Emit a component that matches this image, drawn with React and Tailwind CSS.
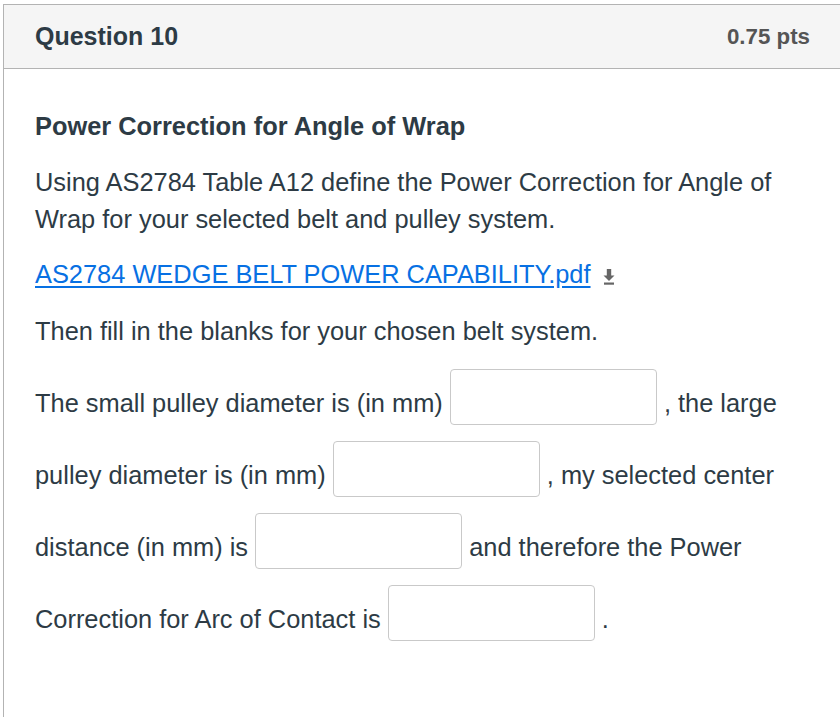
import React from "react";

const FONT = { fontFamily: '"Liberation Sans", Arial, sans-serif' };

function Blank() {
  return (
    <input
      type="text"
      className="inline-block align-middle mb-4 w-[207px] h-[56px] border border-[#c9c9c9] rounded-[4px] bg-white px-2 outline-none"
    />
  );
}

function DownloadIcon() {
  return (
    <svg
      width="16"
      height="20"
      viewBox="0 0 16 20"
      className="inline-block ml-[10px] align-[-3px]"
    >
      <rect x="5.8" y="3" width="4.4" height="7" fill="#666" />
      <path d="M2.5 9.5 L13.5 9.5 L8 15 Z" fill="#666" />
      <rect x="3" y="16.5" width="10" height="2.2" fill="#666" />
    </svg>
  );
}

export default function App() {
  return (
    <div className="min-h-screen bg-white pt-[4px] pl-[3px]" style={FONT}>
      <div className="w-[837px] border-l border-t border-[#b3b3b3] text-[#2d3b45]">
        <div className="h-[64px] flex items-center justify-between pl-[31px] pr-[30px] bg-[#f5f5f5] border-b border-[#b3b3b3]">
          <h2 className="text-[25px] font-bold leading-none">Question 10</h2>
          <div className="text-[22.3px] font-bold text-[#555555] leading-none mt-[1px]">
            0.75 pts
          </div>
        </div>

        <div className="pl-[31px] pr-[32px] pt-[39px] pb-[60px] text-[25.4px]">
          <h3 className="font-bold leading-[36px]">
            Power Correction for Angle of Wrap
          </h3>
          <p className="mt-5 leading-[37px]">
            Using AS2784 Table A12 define the Power Correction for Angle of
            Wrap for your selected belt and pulley system.
          </p>
          <p className="mt-[18px] leading-[37px]">
            <a href="#" className="text-[#0770e3] underline underline-offset-[3px]">
              AS2784 WEDGE BELT POWER CAPABILITY.pdf
            </a>
            <DownloadIcon />
          </p>
          <p className="mt-5 leading-[37px]">
            Then fill in the blanks for your chosen belt system.
          </p>
          <p className="mt-[19px] leading-[64px]">
            The small pulley diameter is (in mm) <Blank /> , the large pulley
            diameter is (in mm) <Blank /> , my selected center distance (in mm)
            is <Blank /> and therefore the Power Correction for Arc of Contact
            is <Blank /> .
          </p>
        </div>
      </div>
    </div>
  );
}
